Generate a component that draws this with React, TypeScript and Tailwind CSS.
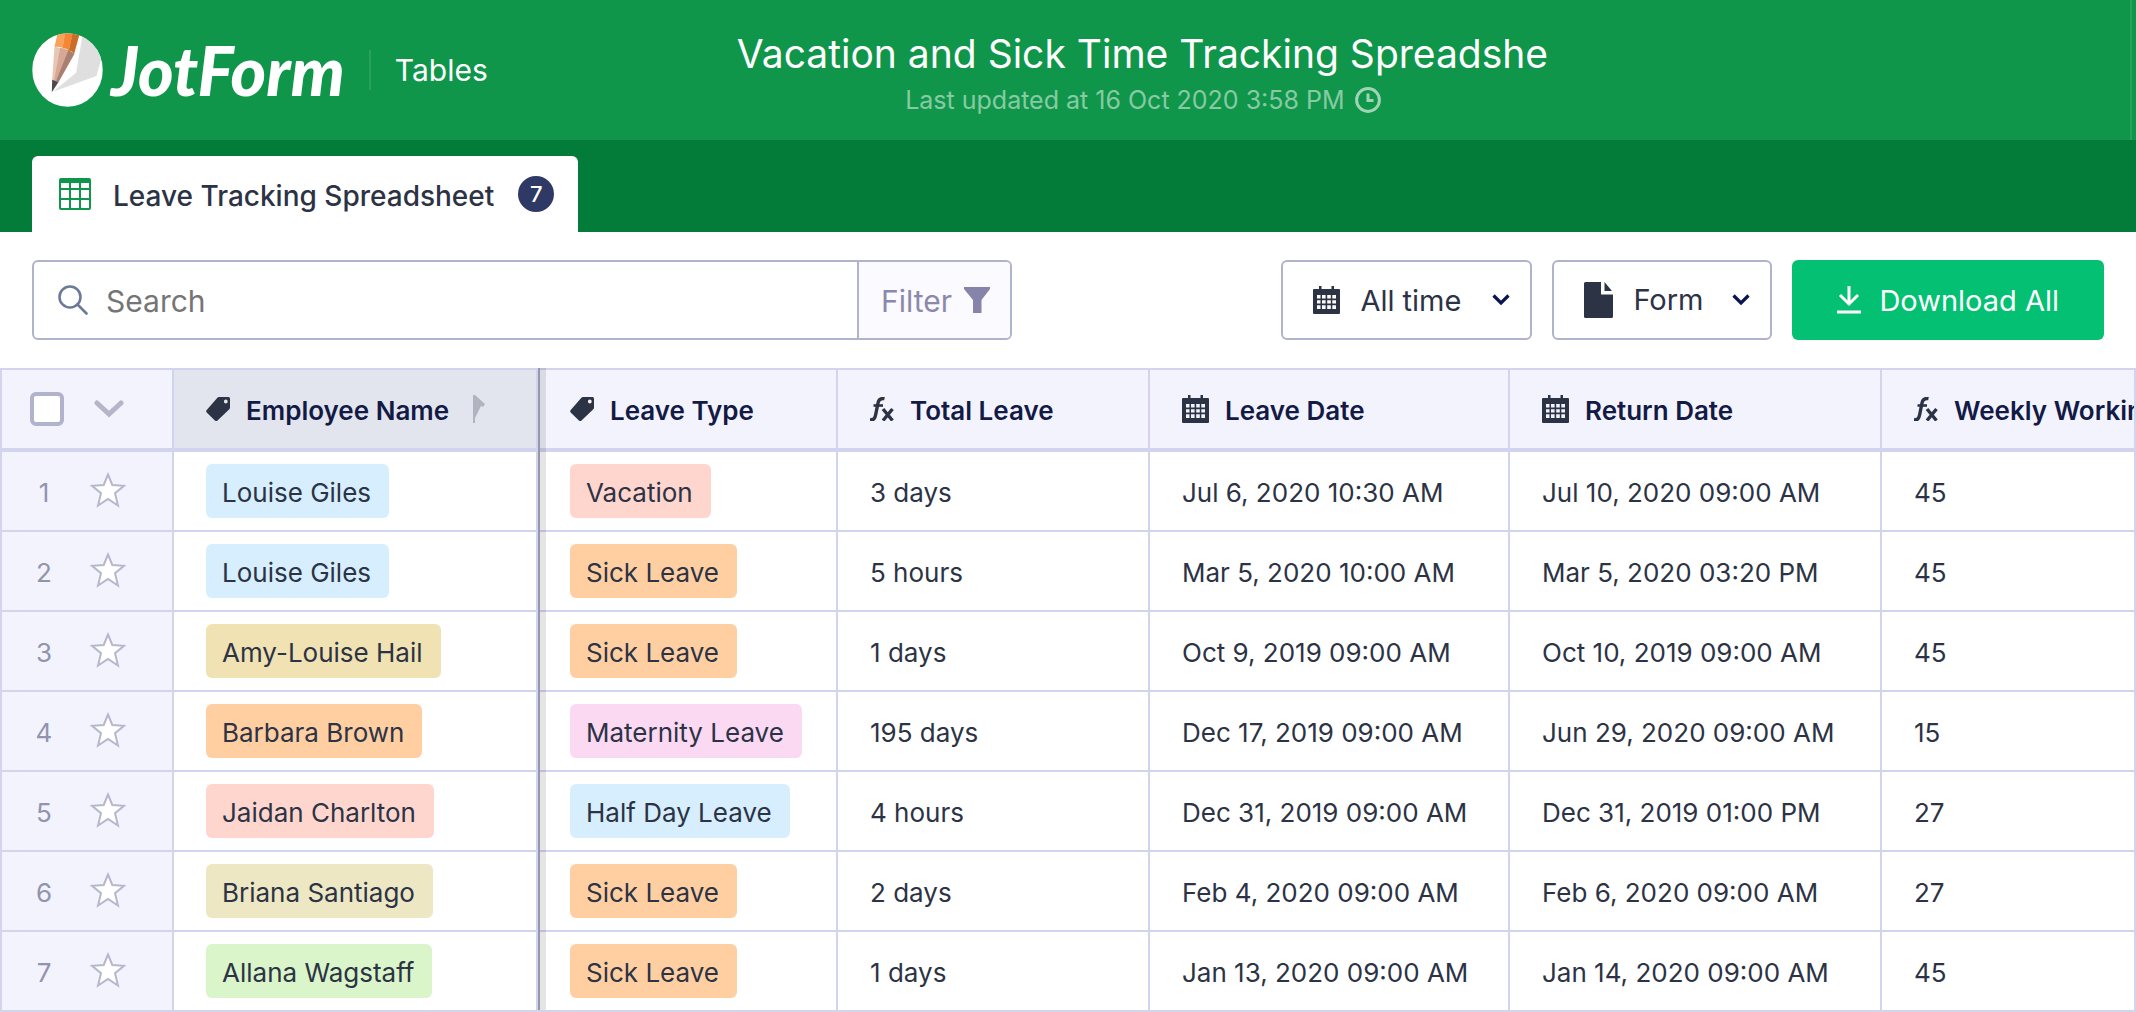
import React, { useState } from 'react';

interface Row {
  name: string;
  nameColor: string;
  type: string;
  typeColor: string;
  total: string;
  leave: string;
  back: string;
  hours: string;
}

const BLUE = 'bg-[#d6eefd]';
const PINK = 'bg-[#ffd6ce]';
const ORANGE = 'bg-[#ffcfa2]';

const ROWS: Row[] = [
  { name: 'Louise Giles', nameColor: BLUE, type: 'Vacation', typeColor: PINK, total: '3 days', leave: 'Jul 6, 2020 10:30 AM', back: 'Jul 10, 2020 09:00 AM', hours: '45' },
  { name: 'Louise Giles', nameColor: BLUE, type: 'Sick Leave', typeColor: ORANGE, total: '5 hours', leave: 'Mar 5, 2020 10:00 AM', back: 'Mar 5, 2020 03:20 PM', hours: '45' },
  { name: 'Amy-Louise Hail', nameColor: 'bg-[#f0e2b2]', type: 'Sick Leave', typeColor: ORANGE, total: '1 days', leave: 'Oct 9, 2019 09:00 AM', back: 'Oct 10, 2019 09:00 AM', hours: '45' },
  { name: 'Barbara Brown', nameColor: ORANGE, type: 'Maternity Leave', typeColor: 'bg-[#fbd9f3]', total: '195 days', leave: 'Dec 17, 2019 09:00 AM', back: 'Jun 29, 2020 09:00 AM', hours: '15' },
  { name: 'Jaidan Charlton', nameColor: PINK, type: 'Half Day Leave', typeColor: BLUE, total: '4 hours', leave: 'Dec 31, 2019 09:00 AM', back: 'Dec 31, 2019 01:00 PM', hours: '27' },
  { name: 'Briana Santiago', nameColor: 'bg-[#ede7c4]', type: 'Sick Leave', typeColor: ORANGE, total: '2 days', leave: 'Feb 4, 2020 09:00 AM', back: 'Feb 6, 2020 09:00 AM', hours: '27' },
  { name: 'Allana Wagstaff', nameColor: 'bg-[#d9f5c9]', type: 'Sick Leave', typeColor: ORANGE, total: '1 days', leave: 'Jan 13, 2020 09:00 AM', back: 'Jan 14, 2020 09:00 AM', hours: '45' },
];

const LogoMark = () => (
  <svg viewBox="96 99 212 222" className="h-[74px] w-[71px] shrink-0" aria-hidden="true">
    <defs>
      <clipPath id="disc">
        <ellipse cx="202" cy="210" rx="106" ry="110" />
      </clipPath>
    </defs>
    <g clipPath="url(#disc)">
      <rect x="96" y="99" width="212" height="222" fill="#fff" />
      <path d="M247 108 L320 108 L301 184 L289 228 L158 275 L228 218 L236 170 Z" fill="#dfdfdf" />
      <path d="M163 140 L194 146 L166 243 L156 240 Z" fill="#e9c6b3" />
      <path d="M180 143 L206 150 L170 244 L162 241 Z" fill="#d6a996" />
      <path d="M205 149 L223 161 L175 247 L168 242 Z" fill="#a97f70" />
      <path d="M156 239 L165 242 L175 246 L155 277 Z" fill="#4b4b4d" />
      <path d="M173 96 L196 96 L187 144 Q175 138 163 141 Z" fill="#f7a35c" />
      <path d="M195 96 L219 96 L206 151 Q197 144 187 145 Z" fill="#f58634" />
      <path d="M218 96 L240 96 L222 161 Q216 153 206 151 Z" fill="#cb6c28" />
    </g>
  </svg>
);

const GridIcon = () => (
  <svg viewBox="0 0 32 32" className="size-8" aria-hidden="true">
    <path
      fill="#0f964a"
      fillRule="evenodd"
      d="M2 0H30Q32 0 32 2V30Q32 32 30 32H2Q0 32 0 30V2Q0 0 2 0ZM2 5V10H10V5ZM12 5V10H20V5ZM22 5V10H30V5ZM2 12V20H10V12ZM12 12V20H20V12ZM22 12V20H30V12ZM2 22V30H10V22ZM12 22V30H20V22ZM22 22V30H30V22Z"
    />
  </svg>
);

const CalendarIcon = () => (
  <svg viewBox="0 0 27 28" className="h-7 w-[27px] shrink-0" aria-hidden="true">
    <path
      fill="#2c3345"
      fillRule="evenodd"
      d="M6 0H8.500V3H18.500V0H21V3H26Q27 3 27 4V27Q27 28 26 28H1Q0 28 0 27V4Q0 3 1 3H6ZM4 9V12.500H7.500V9ZM9 9V12.500H12.600V9ZM14.200 9V12.500H17.800V9ZM19.300 9V12.500H23V9ZM4 14.200V17.600H7.500V14.200ZM9 14.200V17.600H12.600V14.200ZM14.200 14.200V17.600H17.800V14.200ZM19.300 14.200V17.600H23V14.200ZM4 19.300V23H7.500V19.300ZM9 19.300V23H12.600V19.300ZM14.200 19.300V23H17.800V19.300ZM19.300 19.300V23H23V19.300Z"
    />
  </svg>
);

const TagIcon = () => (
  <svg viewBox="0 0 24 24" className="size-6 shrink-0" aria-hidden="true">
    <path
      fill="#2c3345"
      fillRule="evenodd"
      d="M13 0H22.500Q24 0 24 1.500V10.500Q24 11.500 23.300 12.200L11.500 23.400Q10.200 24.500 8.900 23.400L.7 15.400Q-.4 14.200 .7 12.900L11.400 .7Q12 0 13 0ZM19.800 2.600A1.900 1.900 0 1 0 19.800 6.400A1.900 1.900 0 1 0 19.800 2.600Z"
    />
  </svg>
);

const FxIcon = () => (
  <svg viewBox="0 0 24 24" className="size-6 shrink-0" aria-hidden="true">
    <g fill="none" stroke="#2c3345" strokeWidth="3.400">
      <path d="M0 22.500C4 23.500 5 21 5.700 17.500L8 6C8.700 2.500 10.500 1 14.500 1.700" />
      <path d="M3.500 8.500H13" strokeWidth="2.600" />
      <path d="M13 12L22.500 23.500M22.500 12L13 23.500" />
    </g>
  </svg>
);

const ClockIcon = () => (
  <svg viewBox="0 0 26 26" className="size-[26px] text-white/60" fill="none" stroke="currentColor" strokeWidth="3" aria-hidden="true">
    <circle cx="13" cy="13" r="11.400" />
    <path d="M13 6.500V13.500H18.500" />
  </svg>
);

const ChevronIcon = () => (
  <svg viewBox="0 0 18 12" className="pointer-events-none h-3 w-[18px] shrink-0" aria-hidden="true">
    <path d="M1.500 1.500L9 9L16.500 1.500" fill="none" stroke="#0a1551" strokeWidth="3.200" />
  </svg>
);

const StarIcon = () => (
  <svg viewBox="0 0 36 36" className="size-9" aria-hidden="true">
    <path
      d="M18 2.500L22.300 13L34 13.800L25 21.200L28 33.500L18 27L8 33.500L11 21.200L2 13.800L13.700 13Z"
      fill="#fff"
      stroke="#b5b7cd"
      strokeWidth="2"
    />
  </svg>
);

// the pin is folded in half while the column is frozen
const PinIcon = () => (
  <svg viewBox="0 0 12 28" className="ml-2 h-7 w-3 shrink-0" aria-hidden="true">
    <path d="M0 0H2L12 9L10 12L8 11L2 23V28H0Z" fill="#b1b4be" />
  </svg>
);

const HeadCell: React.FC<{ icon: React.ReactNode; label: string; active?: boolean; children?: React.ReactNode }> = ({ icon, label, active, children }) => (
  <th
    scope="col"
    className={`h-[84px] overflow-hidden border-t-2 border-r-2 border-b-4 border-[#d1d4ec] pl-8 text-left font-semibold text-[#121a45] ${active ? 'bg-[#e3e5ee]' : 'bg-[#f3f3fd]'}`}
  >
    <div className="flex items-center gap-4 whitespace-nowrap">
      {icon}
      <span className="pt-1">{label}</span>
      {children}
    </div>
  </th>
);

const Cell: React.FC<{ children: React.ReactNode }> = ({ children }) => (
  <td className="h-20 border-r-2 border-b-2 border-[#d1d4ec] pt-1 pl-8 whitespace-nowrap">{children}</td>
);

const TagCell: React.FC<{ color: string; children: React.ReactNode }> = ({ color, children }) => (
  <td className="h-20 border-r-2 border-b-2 border-[#d1d4ec] pl-8 whitespace-nowrap">
    <span className={`inline-flex h-[54px] items-center rounded-md pt-1 pr-[18px] pl-4 align-middle ${color}`}>{children}</span>
  </td>
);

const App: React.FC = () => {
  const [query, setQuery] = useState('');

  return (
    <div className="min-h-screen overflow-hidden bg-white font-['Inter',sans-serif] text-[26px] leading-8 text-[#2c3345]">
      <header className="flex h-[140px] items-center bg-[#0f964a] pl-8 text-white">
        <a href="#" className="flex items-center gap-2" aria-label="JotForm">
          <LogoMark />
          <span className="font-['Lato',sans-serif] text-[68px] leading-[72px] font-black italic">JotForm</span>
        </a>
        <div className="ml-6 h-10 w-0.5 bg-white/10" />
        <span className="ml-6 text-3xl">Tables</span>
        <div className="flex min-w-0 flex-1 flex-col items-center pt-1">
          <h1 className="w-[812px] overflow-hidden text-[39px] leading-[52px] whitespace-nowrap">Vacation and Sick Time Tracking Spreadsheet</h1>
          <p className="mt-1 flex items-center gap-2.5 text-[25px] leading-8 text-white/50">
            Last updated at 16 Oct 2020 3:58 PM
            <ClockIcon />
          </p>
        </div>
        <div className="flex w-[338px] justify-end self-stretch pr-1">
          <div className="w-0.5 bg-white/10" />
        </div>
      </header>

      <nav className="flex h-[92px] items-end bg-[#027c38] px-8">
        <a href="#" className="flex h-[76px] items-center rounded-t-md bg-white pr-6 pl-[27px] text-[28px] font-medium">
          <GridIcon />
          <span className="ml-[22px] pt-1">Leave Tracking Spreadsheet</span>
          <span className="ml-6 flex size-9 items-center justify-center rounded-full bg-[#2e3966] text-[22px] text-white">7</span>
        </a>
      </nav>

      <div className="flex h-[136px] items-center justify-between px-8">
        <div className="flex h-20 w-[980px] overflow-hidden rounded-md border-2 border-[#b1b3cc]">
          <label htmlFor="search" className="flex items-center pr-[18px] pl-6" aria-label="Search">
            <svg viewBox="0 0 30 30" className="size-[30px]" fill="none" stroke="#6c7a99" strokeWidth="2.600" aria-hidden="true">
              <circle cx="12" cy="12" r="10.500" />
              <path d="M19.500 19.500L28.500 28.500" strokeLinecap="round" />
            </svg>
          </label>
          <input
            id="search"
            type="text"
            aria-label="Search"
            value={query}
            onChange={(e) => setQuery(e.target.value)}
            placeholder="Search"
            className="min-w-0 flex-1 pt-0.5 text-3xl outline-none placeholder:text-[#757575]"
          />
          <button className="flex items-center gap-3 border-l-2 border-[#b1b3cc] bg-[#fbfaff] pr-5 pl-[22px] text-3xl text-[#8b89ab]">
            <span className="pt-0.5">Filter</span>
            <svg viewBox="0 0 26 26" className="size-[26px]" aria-hidden="true">
              <path d="M0 0H26V2L17.500 13V26H9V13L0 2Z" fill="#8783aa" />
            </svg>
          </button>
        </div>

        <div className="flex h-20 gap-5 text-[29px]">
          <label className="flex items-center rounded-md border-2 border-[#b1b3cc] pr-5 pl-[30px]">
            <CalendarIcon />
            <select aria-label="Date range" className="-mr-7 ml-5 appearance-none pt-0.5 pr-[58px] outline-none">
              <option>All time</option>
            </select>
            <ChevronIcon />
          </label>
          <label className="flex items-center rounded-md border-2 border-[#b1b3cc] pr-5 pl-[30px]">
            <svg viewBox="0 0 29 36" className="h-9 w-[29px] shrink-0" aria-hidden="true">
              <path d="M1.500 0H17V12.500H29V34.500Q29 36 27.500 36H1.500Q0 36 0 34.500V1.500Q0 0 1.500 0ZM20.500 0L28 9H20.500Z" fill="#2c3345" />
            </svg>
            <select aria-label="View" className="-mr-7 ml-5 appearance-none pr-14 outline-none">
              <option>Form</option>
            </select>
            <ChevronIcon />
          </label>
          <button className="flex items-center gap-[18px] rounded-md bg-[#04c072] px-[45px] text-white">
            <svg viewBox="0 0 24 28" className="h-7 w-6" fill="none" stroke="currentColor" strokeWidth="3" aria-hidden="true">
              <path d="M12 0V17M3 9L12 18L21 9M0 26H24" />
            </svg>
            <span className="pt-0.5">Download All</span>
          </button>
        </div>
      </div>

      <div className="relative">
        <table className="w-full table-fixed border-separate border-spacing-0">
          <colgroup>
            <col className="w-[174px]" />
            <col className="w-[364px]" />
            <col className="w-[300px]" />
            <col className="w-[312px]" />
            <col className="w-[360px]" />
            <col className="w-[372px]" />
            <col />
          </colgroup>
          <thead>
            <tr>
              <th scope="col" className="border-x-2 border-t-2 border-b-4 border-[#d1d4ec] bg-[#f3f3fd] pl-7">
                <div className="flex items-center gap-[30px]">
                  <input
                    type="checkbox"
                    aria-label="Select all rows"
                    className="size-[34px] appearance-none rounded-md border-4 border-[#b1b3cc] bg-white"
                  />
                  <button aria-label="Selection options">
                    <svg viewBox="0 0 30 18" className="h-[18px] w-[30px]" aria-hidden="true">
                      <path d="M3 3L15 14L27 3" fill="none" stroke="#b5b5ca" strokeWidth="5" strokeLinecap="round" />
                    </svg>
                  </button>
                </div>
              </th>
              <HeadCell icon={<TagIcon />} label="Employee Name" active>
                <PinIcon />
              </HeadCell>
              <HeadCell icon={<TagIcon />} label="Leave Type" />
              <HeadCell icon={<FxIcon />} label="Total Leave" />
              <HeadCell icon={<CalendarIcon />} label="Leave Date" />
              <HeadCell icon={<CalendarIcon />} label="Return Date" />
              <HeadCell icon={<FxIcon />} label="Weekly Working Hours" />
            </tr>
          </thead>
          <tbody>
            {ROWS.map((row, i) => (
              <tr key={i}>
                <td className="border-x-2 border-b-2 border-[#d1d4ec] bg-[#f3f3fd] pl-6">
                  <div className="flex items-center gap-7">
                    <span className="w-9 pt-1 text-center text-[#9294ad]">{i + 1}</span>
                    <button aria-label={`Star row ${i + 1}`} className="pb-0.5">
                      <StarIcon />
                    </button>
                  </div>
                </td>
                <TagCell color={row.nameColor}>{row.name}</TagCell>
                <TagCell color={row.typeColor}>{row.type}</TagCell>
                <Cell>{row.total}</Cell>
                <Cell>{row.leave}</Cell>
                <Cell>{row.back}</Cell>
                <Cell>{row.hours}</Cell>
              </tr>
            ))}
          </tbody>
        </table>
        {/* edge of the frozen columns */}
        <div className="pointer-events-none absolute top-0 bottom-0.5 left-[538px] w-2 border-l-2 border-[#9497ad] bg-black/10" />
      </div>
    </div>
  );
};

export default App;
